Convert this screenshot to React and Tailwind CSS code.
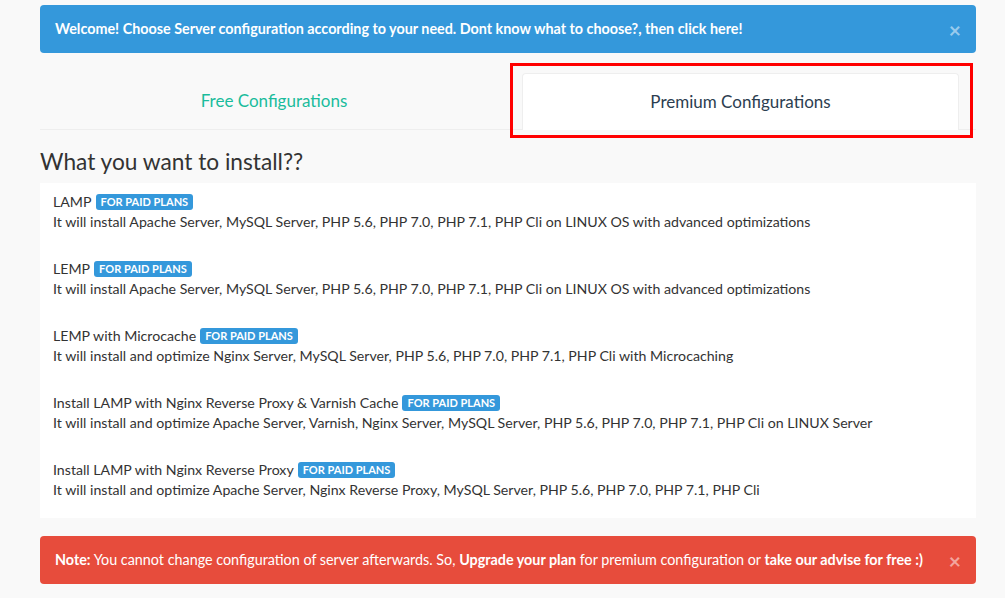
const items = [
  {
    title: 'LAMP',
    desc: 'It will install Apache Server, MySQL Server, PHP 5.6, PHP 7.0, PHP 7.1, PHP Cli on LINUX OS with advanced optimizations',
  },
  {
    title: 'LEMP',
    desc: 'It will install Apache Server, MySQL Server, PHP 5.6, PHP 7.0, PHP 7.1, PHP Cli on LINUX OS with advanced optimizations',
  },
  {
    title: 'LEMP with Microcache',
    desc: 'It will install and optimize Nginx Server, MySQL Server, PHP 5.6, PHP 7.0, PHP 7.1, PHP Cli with Microcaching',
  },
  {
    title: 'Install LAMP with Nginx Reverse Proxy & Varnish Cache',
    desc: 'It will install and optimize Apache Server, Varnish, Nginx Server, MySQL Server, PHP 5.6, PHP 7.0, PHP 7.1, PHP Cli on LINUX Server',
  },
  {
    title: 'Install LAMP with Nginx Reverse Proxy',
    desc: 'It will install and optimize Apache Server, Nginx Reverse Proxy, MySQL Server, PHP 5.6, PHP 7.0, PHP 7.1, PHP Cli',
  },
]

function Alert({ color, children }) {
  return (
    <div className={`flex items-center justify-between h-12 rounded-[4px] pl-[15px] pr-[15px] text-white text-[14.35px] ${color}`}>
      <div>{children}</div>
      <span className="text-[21px] font-bold leading-none text-white/50">×</span>
    </div>
  )
}

export default function App() {
  return (
    <div className="min-h-screen bg-[#f9f9f9] pt-[5px] pl-[40px] pr-[29px] text-[#333] w-[1005px]" style={{ fontFamily: 'Lato, "Open Sans", sans-serif' }}>
      <Alert color="bg-[#3498db]">
        <b>Welcome! Choose Server configuration according to your need. Dont know what to choose?, then click here!</b>
      </Alert>

      <div className="mt-5 grid grid-cols-2 border-b border-[#eee] h-[57px]">
        <div className="flex items-center justify-center text-[17px] text-[#1abc9c]">
          Free Configurations
        </div>
        <div className="relative pl-[14px] pr-[17px]">
          <div className="h-[57px] -mb-px bg-white border border-b-0 border-[#eee] rounded-t-[4px] flex items-center justify-center text-[17px] text-[#2c3e50]">
            Premium Configurations
          </div>
          <div className="absolute -top-[10px] left-[2px] right-[3px] -bottom-[9px] border-[3px] border-[#ff0000] pointer-events-none" />
        </div>
      </div>

      <h2 className="mt-[19px] text-[22.7px] leading-[26px] text-[#333]">What you want to install??</h2>

      <div className="mt-[8px] bg-white pl-[13px] pt-[9px] pb-[18px] flex flex-col gap-[27px] text-[14.17px] leading-[20px]">
        {items.map((it) => (
          <div key={it.title}>
            <div className="flex items-center h-[20px]">
              <span>{it.title}</span>
              <span className="ml-[4px] bg-[#3498db] text-white text-[11px] font-bold leading-[16px] px-[5px] rounded-[3px]">
                FOR PAID PLANS
              </span>
            </div>
            <div>{it.desc}</div>
          </div>
        ))}
      </div>

      <div className="mt-[18px]">
        <Alert color="bg-[#e74c3c]">
          <b>Note:</b> You cannot change configuration of server afterwards. So, <b>Upgrade your plan</b> for premium configuration or <b>take our advise for free :)</b>
        </Alert>
      </div>
    </div>
  )
}
